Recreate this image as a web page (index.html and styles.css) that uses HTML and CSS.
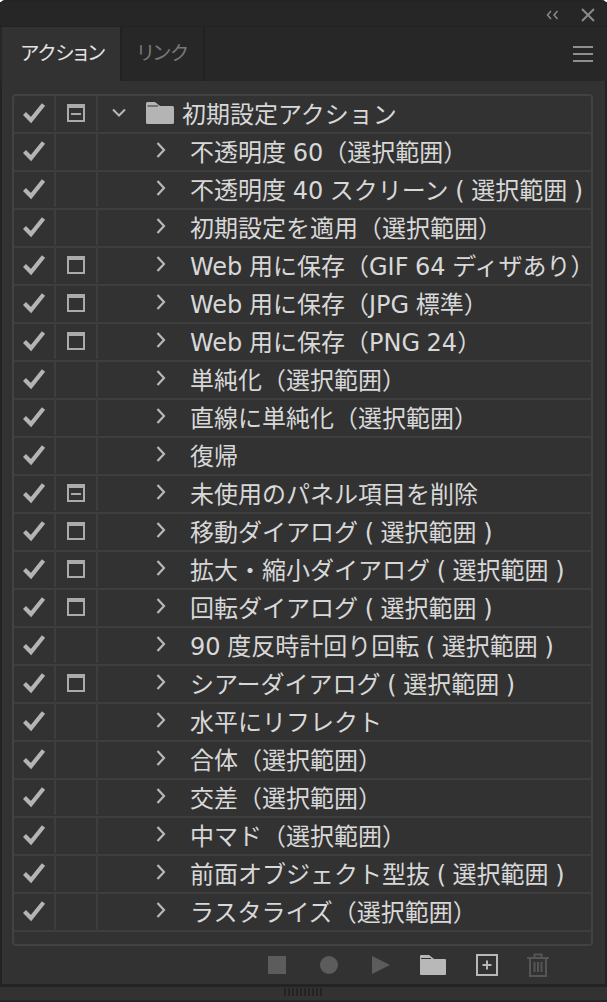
FILE: index.html
```html
<!DOCTYPE html>
<html lang="ja">
<head>
<meta charset="utf-8">
<title>アクション</title>
<link rel="stylesheet" href="styles.css">
</head>
<body>
<svg class="defs" width="0" height="0" aria-hidden="true">
  <symbol id="check" viewBox="0 0 24 24"><path d="M2.500 12.500 9 19 21.500 3.500" fill="none" stroke="currentColor" stroke-width="4.200"/></symbol>
  <symbol id="box" viewBox="0 0 18 18"><path d="M1 2h16v15H1z" fill="none" stroke="currentColor" stroke-width="2"/><path d="M0 2h18" stroke="currentColor" stroke-width="4"/></symbol>
  <symbol id="boxm" viewBox="0 0 18 18"><path d="M1 2h16v15H1z" fill="none" stroke="currentColor" stroke-width="2"/><path d="M0 2h18" stroke="currentColor" stroke-width="4"/><path d="M4 10h10" stroke="currentColor" stroke-width="2"/></symbol>
  <symbol id="chev" viewBox="0 0 10 16"><path d="M1.500 1 8 8 1.500 15" fill="none" stroke="currentColor" stroke-width="2.200"/></symbol>
  <symbol id="folder" viewBox="0 0 28 22"><path d="M0 1.500Q0 0 1.500 0H9L14 4H26.500Q28 4 28 5.500V20.500Q28 22 26.500 22H1.500Q0 22 0 20.500Z" fill="currentColor"/><path d="M1.500 4H12" stroke="#323232" stroke-width="1" fill="none"/></symbol>
</svg>
<div class="window">
  <header class="titlebar">
    <svg class="collapse" width="13" height="10" viewBox="0 0 13 10"><path d="M5 1 1.500 5 5 9M11.500 1 8 5 11.500 9" fill="none" stroke="currentColor" stroke-width="1.500"/></svg>
    <svg class="close" width="14" height="14" viewBox="0 0 14 14"><path d="M1 1 13 13M13 1 1 13" fill="none" stroke="currentColor" stroke-width="2"/></svg>
  </header>
  <nav class="tabs">
    <div class="tab tab-active">アクション</div>
    <div class="tab tab-link">リンク</div>
    <svg class="menu" width="20" height="16" viewBox="0 0 20 16"><path d="M0 1h20M0 8h20M0 15h20" stroke="currentColor" stroke-width="2"/></svg>
  </nav>
  <main class="panel">
    <div class="list">
      <div class="row"><span class="c1"><svg class="ic-check"><use href="#check"/></svg></span><span class="c2"><svg class="ic-box"><use href="#boxm"/></svg></span><span class="c3 set"><svg class="ic-down" viewBox="0 0 14 10"><path d="M1 1.500 7 7.500 13 1.500" fill="none" stroke="currentColor" stroke-width="2"/></svg><svg class="ic-folder"><use href="#folder"/></svg><span class="label set-label">初期設定アクション</span></span></div>
      <div class="row"><span class="c1"><svg class="ic-check"><use href="#check"/></svg></span><span class="c2"></span><span class="c3"><svg class="ic-chev"><use href="#chev"/></svg><span class="label">不透明度 60（選択範囲）</span></span></div>
      <div class="row"><span class="c1"><svg class="ic-check"><use href="#check"/></svg></span><span class="c2"></span><span class="c3"><svg class="ic-chev"><use href="#chev"/></svg><span class="label">不透明度 40 スクリーン ( 選択範囲 )</span></span></div>
      <div class="row"><span class="c1"><svg class="ic-check"><use href="#check"/></svg></span><span class="c2"></span><span class="c3"><svg class="ic-chev"><use href="#chev"/></svg><span class="label">初期設定を適用（選択範囲）</span></span></div>
      <div class="row"><span class="c1"><svg class="ic-check"><use href="#check"/></svg></span><span class="c2"><svg class="ic-box"><use href="#box"/></svg></span><span class="c3"><svg class="ic-chev"><use href="#chev"/></svg><span class="label">Web 用に保存（GIF 64 ディザあり）</span></span></div>
      <div class="row"><span class="c1"><svg class="ic-check"><use href="#check"/></svg></span><span class="c2"><svg class="ic-box"><use href="#box"/></svg></span><span class="c3"><svg class="ic-chev"><use href="#chev"/></svg><span class="label">Web 用に保存（JPG 標準）</span></span></div>
      <div class="row"><span class="c1"><svg class="ic-check"><use href="#check"/></svg></span><span class="c2"><svg class="ic-box"><use href="#box"/></svg></span><span class="c3"><svg class="ic-chev"><use href="#chev"/></svg><span class="label">Web 用に保存（PNG 24）</span></span></div>
      <div class="row"><span class="c1"><svg class="ic-check"><use href="#check"/></svg></span><span class="c2"></span><span class="c3"><svg class="ic-chev"><use href="#chev"/></svg><span class="label">単純化（選択範囲）</span></span></div>
      <div class="row"><span class="c1"><svg class="ic-check"><use href="#check"/></svg></span><span class="c2"></span><span class="c3"><svg class="ic-chev"><use href="#chev"/></svg><span class="label">直線に単純化（選択範囲）</span></span></div>
      <div class="row"><span class="c1"><svg class="ic-check"><use href="#check"/></svg></span><span class="c2"></span><span class="c3"><svg class="ic-chev"><use href="#chev"/></svg><span class="label">復帰</span></span></div>
      <div class="row"><span class="c1"><svg class="ic-check"><use href="#check"/></svg></span><span class="c2"><svg class="ic-box"><use href="#boxm"/></svg></span><span class="c3"><svg class="ic-chev"><use href="#chev"/></svg><span class="label">未使用のパネル項目を削除</span></span></div>
      <div class="row"><span class="c1"><svg class="ic-check"><use href="#check"/></svg></span><span class="c2"><svg class="ic-box"><use href="#box"/></svg></span><span class="c3"><svg class="ic-chev"><use href="#chev"/></svg><span class="label">移動ダイアログ ( 選択範囲 )</span></span></div>
      <div class="row"><span class="c1"><svg class="ic-check"><use href="#check"/></svg></span><span class="c2"><svg class="ic-box"><use href="#box"/></svg></span><span class="c3"><svg class="ic-chev"><use href="#chev"/></svg><span class="label">拡大・縮小ダイアログ ( 選択範囲 )</span></span></div>
      <div class="row"><span class="c1"><svg class="ic-check"><use href="#check"/></svg></span><span class="c2"><svg class="ic-box"><use href="#box"/></svg></span><span class="c3"><svg class="ic-chev"><use href="#chev"/></svg><span class="label">回転ダイアログ ( 選択範囲 )</span></span></div>
      <div class="row"><span class="c1"><svg class="ic-check"><use href="#check"/></svg></span><span class="c2"></span><span class="c3"><svg class="ic-chev"><use href="#chev"/></svg><span class="label">90 度反時計回り回転 ( 選択範囲 )</span></span></div>
      <div class="row"><span class="c1"><svg class="ic-check"><use href="#check"/></svg></span><span class="c2"><svg class="ic-box"><use href="#box"/></svg></span><span class="c3"><svg class="ic-chev"><use href="#chev"/></svg><span class="label">シアーダイアログ ( 選択範囲 )</span></span></div>
      <div class="row"><span class="c1"><svg class="ic-check"><use href="#check"/></svg></span><span class="c2"></span><span class="c3"><svg class="ic-chev"><use href="#chev"/></svg><span class="label">水平にリフレクト</span></span></div>
      <div class="row"><span class="c1"><svg class="ic-check"><use href="#check"/></svg></span><span class="c2"></span><span class="c3"><svg class="ic-chev"><use href="#chev"/></svg><span class="label">合体（選択範囲）</span></span></div>
      <div class="row"><span class="c1"><svg class="ic-check"><use href="#check"/></svg></span><span class="c2"></span><span class="c3"><svg class="ic-chev"><use href="#chev"/></svg><span class="label">交差（選択範囲）</span></span></div>
      <div class="row"><span class="c1"><svg class="ic-check"><use href="#check"/></svg></span><span class="c2"></span><span class="c3"><svg class="ic-chev"><use href="#chev"/></svg><span class="label">中マド（選択範囲）</span></span></div>
      <div class="row"><span class="c1"><svg class="ic-check"><use href="#check"/></svg></span><span class="c2"></span><span class="c3"><svg class="ic-chev"><use href="#chev"/></svg><span class="label">前面オブジェクト型抜 ( 選択範囲 )</span></span></div>
      <div class="row"><span class="c1"><svg class="ic-check"><use href="#check"/></svg></span><span class="c2"></span><span class="c3"><svg class="ic-chev"><use href="#chev"/></svg><span class="label">ラスタライズ（選択範囲）</span></span></div>
    </div>
    <div class="toolbar">
      <svg class="t-stop" width="18" height="18" viewBox="0 0 18 18"><rect width="18" height="18" fill="currentColor"/></svg>
      <svg class="t-rec" width="18" height="18" viewBox="0 0 18 18"><circle cx="9" cy="9" r="9" fill="currentColor"/></svg>
      <svg class="t-play" width="18" height="18" viewBox="0 0 18 18"><path d="M0 0 18 9 0 18Z" fill="currentColor"/></svg>
      <svg class="t-folder" width="26" height="20" viewBox="0 0 26 20"><path d="M0 1Q0 0 1 0H9L14 4H25Q26 4 26 5V19Q26 20 25 20H1Q0 20 0 19Z" fill="currentColor"/><path d="M1 3.500H11" stroke="#323232" fill="none"/></svg>
      <svg class="t-new" width="22" height="22" viewBox="0 0 22 22"><path d="M1 1h20v20H1z" fill="none" stroke="currentColor" stroke-width="2"/><path d="M11 6.500v9M6.500 11h9" stroke="currentColor" stroke-width="2"/></svg>
      <svg class="t-trash" width="22" height="24" viewBox="0 0 22 24"><path d="M0 5h22M7.500 5V1.500h7V5M3 5v18h16V5M7.500 9v10M11 9v10M14.500 9v10" fill="none" stroke="currentColor" stroke-width="2"/></svg>
    </div>
  </main>
  <div class="grip"><span class="grip-dots"></span></div>
</div>
</body>
</html>
```
FILE: styles.css
```css
* { box-sizing: border-box; }
html, body { margin: 0; padding: 0; }
body {
  width: 607px;
  height: 1002px;
  overflow: hidden;
  background: #fff;
  font-family: "DejaVu Sans", "Noto Sans CJK JP", sans-serif;
}
.defs { position: absolute; }
.window {
  width: 607px;
  height: 1002px;
  display: flex;
  flex-direction: column;
  background: #232323;
  padding: 2px 0 0;
  border-radius: 5px 5px 0 0;
}
.titlebar {
  height: 25px;
  flex: none;
  background: #262626;
  border-bottom: 1px solid #222;
  display: flex;
  align-items: center;
  justify-content: flex-end;
  color: #8a8a8a;
  padding-right: 12px;
  gap: 22px;
}
.collapse { margin-top: 1px; }
.close { margin-top: 1px; }
.tabs {
  height: 54px;
  flex: none;
  display: flex;
  align-items: stretch;
  background: #272727;
  padding-left: 2px;
  position: relative;
}
.tab {
  width: 83px;
  display: flex;
  align-items: center;
  justify-content: center;
  font-family: "Noto Sans CJK JP", sans-serif;
  font-size: 19.500px;
  font-feature-settings: "palt";
  color: #777;
  border-right: 2px solid #222;
  padding: 0 0 5px 0;
}
.tab-active {
  width: 120px;
  background: #323232;
  color: #e4e4e4;
  border-right: 2px solid #222;
  padding: 0 2px 5px 6px;
}
.menu {
  position: absolute;
  right: 14px;
  top: 19px;
  color: #8f8f8f;
}
.panel {
  height: 903px;
  flex: none;
  margin: 0 2px;
  background: #323232;
  display: flex;
  flex-direction: column;
  padding-top: 13px;
}
.list {
  margin: 0 12px 0 10px;
  height: 852px;
  flex: none;
  border: 2px solid #424242;
  border-radius: 4px;
}
.row {
  height: 38px;
  display: flex;
  border-bottom: 2px solid #3e3e3e;
}
.c1, .c2 {
  width: 42px;
  flex: none;
  display: flex;
  align-items: center;
  justify-content: center;
  border-right: 2px solid #3e3e3e;
  margin-bottom: 1px;
}
.c1 { color: #b4b4b4; }
.c2 { color: #ababab; }
.c3 {
  flex: 1;
  display: flex;
  align-items: center;
  min-width: 0;
  white-space: nowrap;
}
.ic-check { width: 24px; height: 24px; margin-top: -2px; }
.ic-box { width: 18px; height: 18px; margin-top: -1px; }
.ic-chev { width: 10px; height: 16px; margin-left: 58px; margin-top: -4px; color: #b8b8b8; flex: none; }
.ic-down { width: 14px; height: 10px; margin-left: 14px; margin-top: -3px; color: #b8b8b8; flex: none; }
.ic-folder { width: 28px; height: 22px; margin-left: 20px; color: #b4b4b4; flex: none; margin-top: -3px; }
.label {
  font-size: 24px;
  line-height: 36px;
  margin-left: 24px;
  margin-top: 1px;
  word-spacing: -1px;
  color: #d8d8d8;
}
.set-label { margin-left: 8px; }
.toolbar {
  height: 38px;
  flex: none;
  display: flex;
  align-items: center;
  padding-left: 266px;
  color: #5c5c5c;
}
.t-rec { margin-left: 34px; }
.t-play { margin-left: 34px; }
.t-folder { margin-left: 30px; color: #b8b8b8; }
.t-new { margin-left: 30px; color: #b8b8b8; }
.t-trash { margin-left: 29px; color: #555; }
.grip {
  flex: 1;
  background: #323232;
  border-top: 3px solid #232323;
  border-bottom: 2px solid #262626;
  position: relative;
}
.grip-dots {
  position: absolute;
  left: 284px;
  top: 1px;
  width: 38px;
  height: 8px;
  background: repeating-linear-gradient(90deg, #232323 0 2px, transparent 2px 4px);
}
```
